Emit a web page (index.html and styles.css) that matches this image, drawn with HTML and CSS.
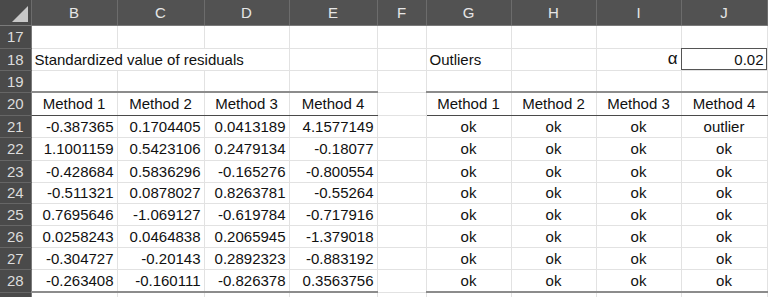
FILE: index.html
```html
<!DOCTYPE html>
<html lang="en">
<head>
  <meta charset="UTF-8" />
  <title>Residuals - outliers</title>
  <link rel="stylesheet" href="styles.css">
</head>
<body>
  <table class="sheet">
    <colgroup>
      <col class="c-num">
      <col class="c-b"><col class="c-c"><col class="c-d"><col class="c-e">
      <col class="c-f">
      <col class="c-g"><col class="c-h"><col class="c-i"><col class="c-j">
    </colgroup>
    <tr class="cols h25">
      <th class="corner"><span class="tri"></span></th>
      <th>B</th><th>C</th><th>D</th><th>E</th><th>F</th><th>G</th><th>H</th><th>I</th><th>J</th>
    </tr>
    <tr class="h23">
      <th class="rn">17</th>
      <td></td><td></td><td></td><td></td><td></td><td></td><td></td><td></td><td></td>
    </tr>
    <tr class="h22">
      <th class="rn">18</th>
      <td colspan="3" class="txt">Standardized value of residuals</td><td></td><td></td>
      <td class="txt">Outliers</td><td></td><td class="num sym">α</td><td class="num alpha">0.02</td>
    </tr>
    <tr class="h22">
      <th class="rn">19</th>
      <td></td><td></td><td></td><td></td><td></td><td></td><td></td><td></td><td></td>
    </tr>
    <tr class="h23 head">
      <th class="rn">20</th>
      <td class="t">Method 1</td><td class="t">Method 2</td><td class="t">Method 3</td><td class="t">Method 4</td>
      <td></td>
      <td class="t">Method 1</td><td class="t">Method 2</td><td class="t">Method 3</td><td class="t">Method 4</td>
    </tr>
    <tr class="h22">
      <th class="rn">21</th>
      <td class="num">-0.387365</td><td class="num">0.1704405</td><td class="num">0.0413189</td><td class="num">4.1577149</td>
      <td></td>
      <td class="mid">ok</td><td class="mid">ok</td><td class="mid">ok</td><td class="mid">outlier</td>
    </tr>
    <tr class="h23">
      <th class="rn">22</th>
      <td class="num">1.1001159</td><td class="num">0.5423106</td><td class="num">0.2479134</td><td class="num">-0.18077</td>
      <td></td>
      <td class="mid">ok</td><td class="mid">ok</td><td class="mid">ok</td><td class="mid">ok</td>
    </tr>
    <tr class="h22">
      <th class="rn">23</th>
      <td class="num">-0.428684</td><td class="num">0.5836296</td><td class="num">-0.165276</td><td class="num">-0.800554</td>
      <td></td>
      <td class="mid">ok</td><td class="mid">ok</td><td class="mid">ok</td><td class="mid">ok</td>
    </tr>
    <tr class="h21">
      <th class="rn">24</th>
      <td class="num">-0.511321</td><td class="num">0.0878027</td><td class="num">0.8263781</td><td class="num">-0.55264</td>
      <td></td>
      <td class="mid">ok</td><td class="mid">ok</td><td class="mid">ok</td><td class="mid">ok</td>
    </tr>
    <tr class="h22">
      <th class="rn">25</th>
      <td class="num">0.7695646</td><td class="num">-1.069127</td><td class="num">-0.619784</td><td class="num">-0.717916</td>
      <td></td>
      <td class="mid">ok</td><td class="mid">ok</td><td class="mid">ok</td><td class="mid">ok</td>
    </tr>
    <tr class="h22">
      <th class="rn">26</th>
      <td class="num">0.0258243</td><td class="num">0.0464838</td><td class="num">0.2065945</td><td class="num">-1.379018</td>
      <td></td>
      <td class="mid">ok</td><td class="mid">ok</td><td class="mid">ok</td><td class="mid">ok</td>
    </tr>
    <tr class="h22">
      <th class="rn">27</th>
      <td class="num">-0.304727</td><td class="num">-0.20143</td><td class="num">0.2892323</td><td class="num">-0.883192</td>
      <td></td>
      <td class="mid">ok</td><td class="mid">ok</td><td class="mid">ok</td><td class="mid">ok</td>
    </tr>
    <tr class="h23 last">
      <th class="rn">28</th>
      <td class="num t">-0.263408</td><td class="num t">-0.160111</td><td class="num t">-0.826378</td><td class="num t">0.3563756</td>
      <td></td>
      <td class="mid t">ok</td><td class="mid t">ok</td><td class="mid t">ok</td><td class="mid t">ok</td>
    </tr>
    <tr class="h22">
      <th class="rn"></th>
      <td></td><td></td><td></td><td></td><td></td><td></td><td></td><td></td><td></td>
    </tr>
  </table>
</body>
</html>
```

FILE: styles.css
```css
body {
  margin: 0;
  background: #fff;
  overflow: hidden;
  font-family: 'Liberation Sans', Arial, sans-serif;
}
.sheet {
  border-collapse: collapse;
  table-layout: fixed;
  width: 767px;
  font-size: 15px;
  color: #111;
}
.c-num { width: 31px; }
.c-b { width: 86px; }
.c-c { width: 87px; }
.c-d { width: 85px; }
.c-e { width: 88px; }
.c-f { width: 49px; }
.c-g, .c-h, .c-i { width: 85px; }
.c-j { width: 86px; }

.h25 { height: 25px; }
.h23 { height: 23px; }
.h22 { height: 22px; }
.h21 { height: 21px; }

td {
  padding: 0 3px;
  border: 1px solid #e2e2e2;
  white-space: nowrap;
  overflow: hidden;
  vertical-align: middle;
}
th {
  padding: 0;
  font-weight: normal;
}

/* column letters */
.cols th {
  background: #525252;
  color: #e6e6e6;
  font-size: 15px;
  border-right: 1px solid #6c6c6c;
  border-bottom: 1px solid #7a7a7a;
}
.cols th.corner {
  position: relative;
  background: #4a4a4a;
}
.tri {
  position: absolute;
  right: 3px;
  bottom: 3px;
  width: 0;
  height: 0;
  border-left: 16px solid transparent;
  border-bottom: 16px solid #c8c8c8;
}

/* row numbers */
.rn {
  background: #4a4a4a;
  color: #dcdcdc;
  font-size: 15px;
  text-align: center;
  border-bottom: 1px solid #666;
  border-right: 1px solid #7a7a7a;
}

.txt { text-align: left; padding-left: 3px; }
.num { text-align: right; }
.mid { text-align: center; }
.sym { font-size: 17px; }

/* selected input cell */
.alpha {
  outline: 1px solid #555;
  outline-offset: -1px;
}

/* table header: grey top rule, dark bottom rule */
.head td.t {
  text-align: center;
  border-top: 2px solid #8c8c8c;
  border-bottom: 1px solid #4a4a4a;
}
.last td.t {
  border-bottom: 2px solid #8c8c8c;
}
```
